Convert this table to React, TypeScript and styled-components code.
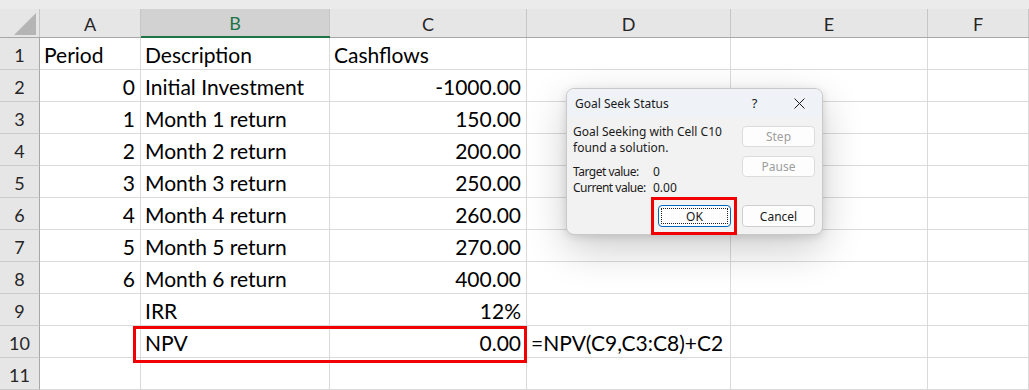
import styled, { createGlobalStyle } from "styled-components";

type Align = "left" | "right";

type SheetRow = {
  cells: { text: string; align?: Align }[];
};

const COLUMNS = ["A", "B", "C", "D", "E", "F"];
const ACTIVE_COLUMN = "B";

const rows: SheetRow[] = [
  {
    cells: [{ text: "Period" }, { text: "Description" }, { text: "Cashflows" }],
  },
  {
    cells: [
      { text: "0", align: "right" },
      { text: "Initial Investment" },
      { text: "-1000.00", align: "right" },
    ],
  },
  ...[150, 200, 250, 260, 270, 400].map((amount, i) => ({
    cells: [
      { text: String(i + 1), align: "right" as Align },
      { text: `Month ${i + 1} return` },
      { text: amount.toFixed(2), align: "right" as Align },
    ],
  })),
  { cells: [{ text: "" }, { text: "IRR" }, { text: "12%", align: "right" }] },
  {
    cells: [
      { text: "" },
      { text: "NPV" },
      { text: "0.00", align: "right" },
      { text: "=NPV(C9,C3:C8)+C2" },
    ],
  },
  { cells: [] },
];

const GlobalStyle = createGlobalStyle`
  html, body {
    margin: 0;
    padding: 0;
    background: #ffffff;
    overflow: hidden;
  }
`;

const Sheet = styled.div`
  position: relative;
  width: 1029px;
  height: 390px;
  overflow: hidden;
  display: grid;
  grid-template-columns: 40px 101px 189px 197px 204px 197px 101px;
  grid-template-rows: 38px repeat(11, 32px);
  font-family: Lato, "Liberation Sans", sans-serif;
`;

const Corner = styled.div`
  box-sizing: border-box;
  padding-top: 9px;
  background: #ebebeb;
  border-bottom: 1px solid #a8a8a8;
  display: flex;
`;

const CornerInner = styled.div`
  flex: 1;
  background: #e6e6e6;
  border-right: 1px solid #c6c6c6;
  display: flex;
  align-items: flex-end;
  justify-content: flex-end;
  padding: 0 3px 2px 0;
`;

const ColumnHead = styled.div<{ $active?: boolean }>`
  box-sizing: border-box;
  padding-top: 9px;
  background: #ebebeb;
  border-bottom: ${(p) =>
    p.$active ? "2px solid #217346" : "1px solid #a8a8a8"};
  display: flex;
`;

const HeadLabel = styled.div<{ $active?: boolean }>`
  flex: 1;
  display: flex;
  align-items: center;
  justify-content: center;
  background: ${(p) => (p.$active ? "#d2d2d2" : "#e6e6e6")};
  border-right: 1px solid #c6c6c6;
  color: ${(p) => (p.$active ? "#217346" : "#262626")};
  font-size: 18px;
  padding-top: 1px;
`;

const RowHead = styled.div`
  box-sizing: border-box;
  background: #e6e6e6;
  border-right: 1px solid #a8a8a8;
  border-bottom: 1px solid #cbcbcb;
  display: flex;
  align-items: center;
  justify-content: center;
  color: #262626;
  font-size: 18px;
  padding-top: 2px;
`;

const Cell = styled.div<{ $align?: Align }>`
  box-sizing: border-box;
  border-right: 1px solid #dadada;
  border-bottom: 1px solid #dadada;
  display: flex;
  align-items: center;
  justify-content: ${(p) => (p.$align === "right" ? "flex-end" : "flex-start")};
  padding: 2px 5px 0 4px;
  font-size: 21px;
  color: #000000;
  white-space: nowrap;
`;

/* annotation rectangles drawn on top of the sheet */
const Highlight = styled.div<{
  $x: number;
  $y: number;
  $w: number;
  $h: number;
}>`
  position: absolute;
  left: ${(p) => p.$x}px;
  top: ${(p) => p.$y}px;
  width: ${(p) => p.$w}px;
  height: ${(p) => p.$h}px;
  box-sizing: border-box;
  border: 3px solid #f00000;
  z-index: 3;
  pointer-events: none;
`;

const Dialog = styled.div`
  position: absolute;
  left: 566px;
  top: 88px;
  width: 257px;
  height: 147px;
  box-sizing: border-box;
  border: 1px solid #c9c9c9;
  border-radius: 8px;
  overflow: hidden;
  background: #f2f2f2;
  box-shadow: 0 14px 40px rgba(0, 0, 0, 0.2), 0 2px 8px rgba(0, 0, 0, 0.12);
  z-index: 2;
  display: flex;
  flex-direction: column;
  font-family: "Noto Sans", "Open Sans", sans-serif;
  font-size: 12px;
  color: #1a1a1a;
`;

const TitleBar = styled.div`
  height: 28px;
  background: #eff3f8;
  display: flex;
  align-items: center;
  padding-left: 8px;
`;

const Title = styled.div`
  flex: 1;
`;

const TitleButton = styled.div`
  width: 45px;
  height: 28px;
  display: flex;
  align-items: center;
  justify-content: center;
  font-size: 13px;
`;

const Body = styled.div`
  flex: 1;
  display: flex;
  flex-direction: column;
  padding: 7px 7px 7px 6px;
`;

const TopArea = styled.div`
  display: flex;
  justify-content: space-between;
`;

const Messages = styled.div`
  display: flex;
  flex-direction: column;
  gap: 8px;
  line-height: 16px;
`;

const ValueGrid = styled.div`
  display: grid;
  grid-template-columns: 80px auto;
`;

const ValueLabel = styled.span`
  letter-spacing: -0.5px;
`;

const ButtonColumn = styled.div`
  display: flex;
  flex-direction: column;
  gap: 9px;
  padding-top: 2px;
`;

const ButtonRow = styled.div`
  display: flex;
  justify-content: flex-end;
  gap: 11px;
  margin-top: auto;
`;

const DialogButton = styled.div<{ $disabled?: boolean; $default?: boolean }>`
  position: relative;
  box-sizing: border-box;
  width: 73px;
  height: ${(p) => (p.$default !== undefined ? 22 : 21)}px;
  display: flex;
  align-items: center;
  justify-content: center;
  background: #fdfdfd;
  border: 1px solid
    ${(p) => (p.$default ? "#0067c0" : p.$disabled ? "#dcdcdc" : "#cfcfcf")};
  border-radius: 4px;
  color: ${(p) => (p.$disabled ? "#9d9d9d" : "#1a1a1a")};

  ${(p) =>
    p.$default &&
    `
    &::after {
      content: "";
      position: absolute;
      inset: 2px;
      border: 1px dotted #202020;
    }
  `}
`;

const CloseIcon = () => (
  <svg width="11" height="11" viewBox="0 0 11 11">
    <path d="M0.5 0.5 L10.5 10.5 M10.5 0.5 L0.5 10.5" stroke="#1a1a1a" strokeWidth="1" />
  </svg>
);

const CornerTriangle = () => (
  <svg width="22" height="22" viewBox="0 0 22 22">
    <polygon points="22,0 22,22 0,22" fill="#b5b5b5" />
  </svg>
);

export default function App() {
  return (
    <>
      <GlobalStyle />
      <Sheet>
        <Corner>
          <CornerInner>
            <CornerTriangle />
          </CornerInner>
        </Corner>
        {COLUMNS.map((col) => (
          <ColumnHead key={col} $active={col === ACTIVE_COLUMN}>
            <HeadLabel $active={col === ACTIVE_COLUMN}>{col}</HeadLabel>
          </ColumnHead>
        ))}

        {rows.map((row, r) => (
          <>
            <RowHead key={`h${r}`}>{r + 1}</RowHead>
            {COLUMNS.map((col, c) => {
              const cell = row.cells[c];
              return (
                <Cell key={`${r}-${col}`} $align={cell?.align}>
                  {cell?.text}
                </Cell>
              );
            })}
          </>
        ))}

        <Dialog>
          <TitleBar>
            <Title>Goal Seek Status</Title>
            <TitleButton>?</TitleButton>
            <TitleButton>
              <CloseIcon />
            </TitleButton>
          </TitleBar>
          <Body>
            <TopArea>
              <Messages>
                <div>
                  Goal Seeking with Cell C10
                  <br />
                  found a solution.
                </div>
                <ValueGrid>
                  <ValueLabel>Target value:</ValueLabel>
                  <span>0</span>
                  <ValueLabel>Current value:</ValueLabel>
                  <span>0.00</span>
                </ValueGrid>
              </Messages>
              <ButtonColumn>
                <DialogButton $disabled>Step</DialogButton>
                <DialogButton $disabled>Pause</DialogButton>
              </ButtonColumn>
            </TopArea>
            <ButtonRow>
              <DialogButton $default>OK</DialogButton>
              <DialogButton $default={false}>Cancel</DialogButton>
            </ButtonRow>
          </Body>
        </Dialog>

        <Highlight $x={651} $y={197} $w={86} $h={38} />
        <Highlight $x={133} $y={326} $w={394} $h={37} />
      </Sheet>
    </>
  );
}
